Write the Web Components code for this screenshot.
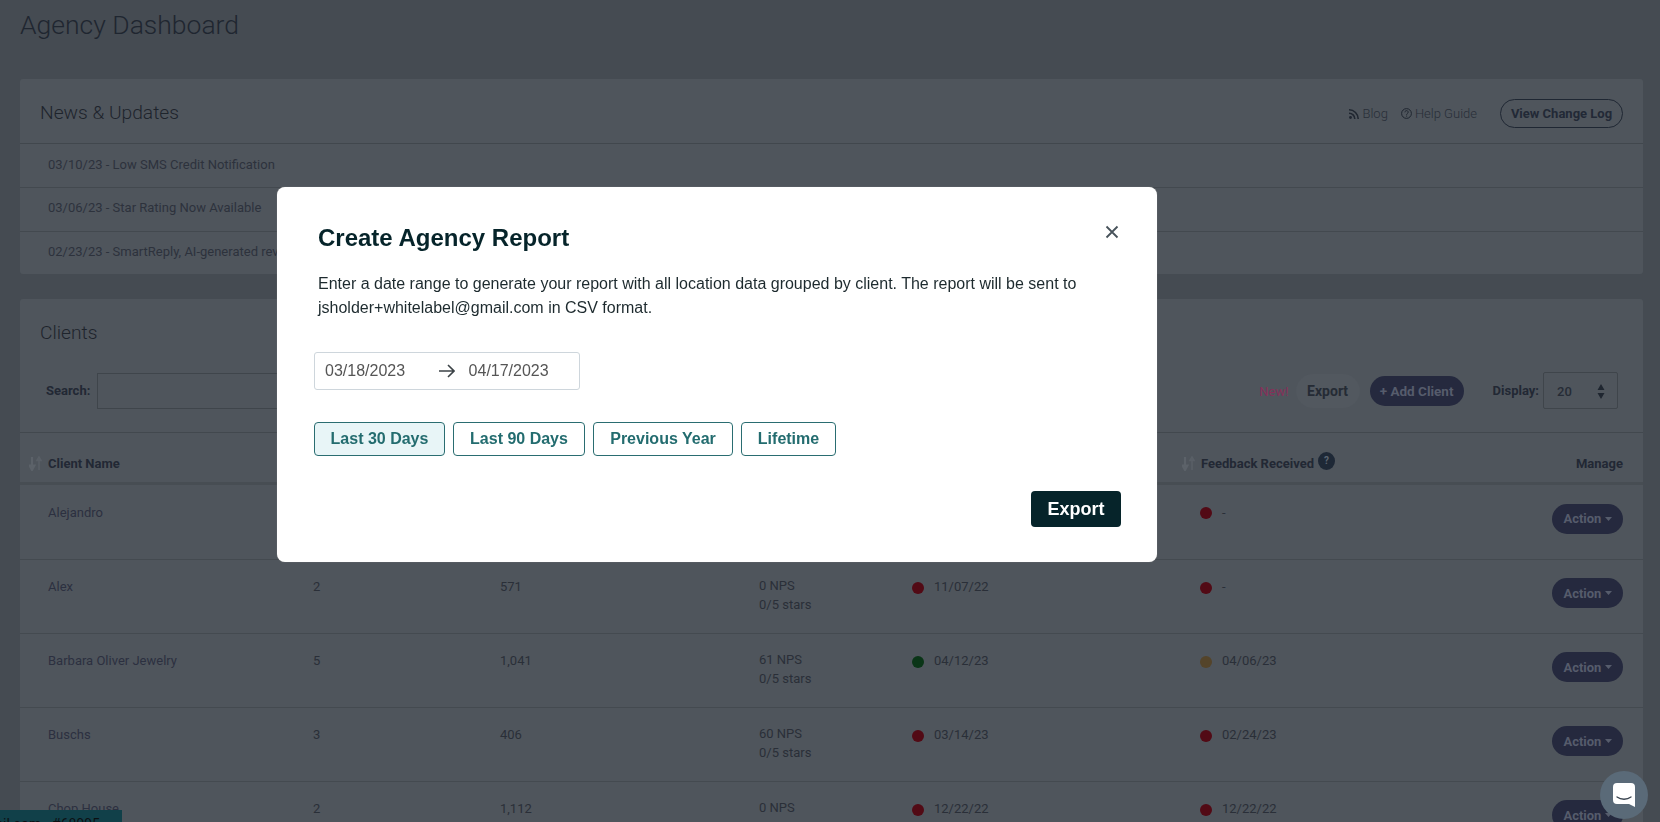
<!DOCTYPE html>
<html lang="en"><head><meta charset="utf-8"><title>Agency Dashboard</title>
<style>
html,body{margin:0;height:822px;overflow:hidden;background:#454b52}
body{font:13px Roboto,sans-serif;color:#2a2f38}
</style></head><body>
<agency-dashboard></agency-dashboard>
<report-modal></report-modal>
<account-tag></account-tag>
<chat-launcher></chat-launcher>
<script>
function define(name, css, html){
  customElements.define(name, class extends HTMLElement{
    connectedCallback(){
      if(this.shadowRoot) return;
      const r=this.attachShadow({mode:'open'});
      r.innerHTML='<style>'+css+'</style>'+(typeof html==='function'?html(this):html);
    }
  });
}
const a=(el,k,d='')=>el.getAttribute(k)??d;
const SORT='<svg width="13" height="15" viewBox="0 0 13 15"><path d="M3 1v10M0.6 9.5 3 14l2.400-4.500z" fill="#5c6269" stroke="#5c6269" stroke-width="2.200"/><path d="M10 14V4M7.900 4.500 10 1l2.100 3.500z" fill="#595f66" stroke="#595f66" stroke-width="1.600"/></svg>';

define('pill-button',`
:host{display:inline-flex;align-items:center;justify-content:center;box-sizing:border-box;border-radius:16px;font:700 13px Roboto,sans-serif;white-space:nowrap;height:30px}
:host([kind=navy]){background:#25293e;color:#565c6c}
:host([kind=ghost]){background:#52585f;color:#252b35;height:34px;width:64px;border-radius:17px;font-size:14px}
:host([kind=line]){border:1px solid #1f2733;color:#222936;height:29px;width:123px}
`,'<slot></slot>');

define('panel-card',`
:host{display:block;background:#4f555c;border-radius:3px}
`,'<slot></slot>');

define('news-row',`
:host{display:flex;align-items:center;height:43.330px;box-sizing:border-box;padding:0 0 3px 28px;border-top:1px solid #43494f;color:#2d323c;font:13px Roboto,sans-serif}
:host(:first-of-type){border-top:0}
`,'<slot></slot>');

define('news-panel',`
:host{display:block}
header{display:flex;align-items:center;height:64px;box-sizing:border-box;padding:5px 20px 0}
h2{margin:-3px 0 0;font:300 19.200px Roboto,sans-serif;color:#1e242c;flex:1}
.lnk{display:inline-flex;align-items:center;gap:3px;font:300 13px Roboto,sans-serif;color:#282e38;margin-right:13px}
.lnk svg{flex:none}
.lnk.last{margin-right:23px}
.rule{height:1px;background:#41474d}
`,`<panel-card>
<header><h2>News &amp; Updates</h2>
<span class="lnk"><svg width="10" height="10" viewBox="0 0 10 10" fill="#1f2630"><circle cx="1.500" cy="8.500" r="1.400"/><path d="M0 3.400a6.600 6.600 0 0 1 6.600 6.600H5A5 5 0 0 0 0 5zM0 0a10 10 0 0 1 10 10H8.400A8.400 8.400 0 0 0 0 1.600z"/></svg>Blog</span>
<span class="lnk last"><svg width="11" height="11" viewBox="0 0 11 11" fill="none" stroke="#1f2630"><circle cx="5.500" cy="5.500" r="4.900"/><path d="M3.900 4.300c0-2.200 3.300-2.200 3.300-.1 0 1.300-1.500 1.200-1.600 2.600M5.600 7.600v1" stroke-width="1"/></svg>Help Guide</span>
<pill-button kind="line">View Change Log</pill-button>
</header>
<div class="rule"></div>
<news-row>03/10/23 - Low SMS Credit Notification</news-row>
<news-row>03/06/23 - Star Rating Now Available</news-row>
<news-row>02/23/23 - SmartReply, AI-generated review responses</news-row>
</panel-card>`);

define('status-cell',`
:host{display:flex;align-items:center;gap:10px;color:#2a2f38;font:13px Roboto,sans-serif;height:19px}
i{width:12px;height:12px;border-radius:50%;flex:none;margin-top:2px}
`,el=>`<i style="background:${a(el,'color','#520a15')}"></i><slot></slot>`);

define('client-row',`
:host{display:grid;grid-template-columns:265px 187px 259px 153px 288px 1fr 71px;height:74px;box-sizing:border-box;padding:17.500px 20px 0 28px;border-top:1px solid #444a50;font:13px/19px Roboto,sans-serif;color:#2a2f38}
.name{color:#2c3040}
.act{justify-self:end;margin-top:1px}
.nps{line-height:18.500px}
`,el=>`<div class="name">${a(el,'name')}</div><div>${a(el,'locs')}</div><div>${a(el,'resp')}</div>
<div class="nps">${a(el,'nps')?a(el,'nps')+' NPS<br>0/5 stars':''}</div>
<div>${a(el,'d1')?`<status-cell color="${a(el,'c1')}">${a(el,'d1')}</status-cell>`:''}</div>
<div><status-cell color="${a(el,'c2')}">${a(el,'d2')}</status-cell></div>
<pill-button kind="navy" class="act" style="width:71px">Action&nbsp;<svg width="7" height="4" viewBox="0 0 7 4"><path d="M0 0h7L3.500 4z" fill="#565c6c"/></svg></pill-button>`);

define('clients-panel',`
:host{display:block;margin-top:25px}
h2{margin:0;font:300 19.200px/24px Roboto,sans-serif;color:#1e242c;padding:22px 20px 0}
.bar{display:flex;align-items:center;height:87px;padding:5px 25px 0 26px;box-sizing:border-box}
b{font:700 13px Roboto,sans-serif;color:#222834}
.search{display:block;width:440px;height:36px;box-sizing:border-box;border:1px solid #3f454b;margin-left:7px}
.sp{flex:1}
.new{color:#86305a;font:13px Roboto,sans-serif;margin-right:7px;margin-top:2px}
.add{margin:0 29px 0 10px;width:94px;font-size:13.500px}
.sel{display:flex;align-items:center;justify-content:space-between;width:75px;height:37px;box-sizing:border-box;border:1px solid #3f454b;border-radius:2px;padding:1px 12px 0 13px;margin-left:4px;color:#262c36;font:500 13px Roboto,sans-serif}
.head{display:grid;grid-template-columns:1153px 1fr auto;align-items:center;height:53px;box-sizing:border-box;border-top:1px solid #42484e;border-bottom:3px solid #474d53;padding:12px 20px 0 9px;color:#222834;font:700 13px Roboto,sans-serif}
.c{display:flex;align-items:center;gap:6px}
.q{display:inline-flex;align-items:center;justify-content:center;width:17px;height:18px;border-radius:50%;background:#1e2836;color:#5c6672;font:700 10px Roboto,sans-serif;margin:-5px 0 0 -2px}
`,`<panel-card>
<h2>Clients</h2>
<div class="bar"><b>Search:</b><span class="search"></span><span class="sp"></span>
<span class="new">New!</span><pill-button kind="ghost">Export</pill-button><pill-button kind="navy" class="add">+ Add Client</pill-button>
<b>Display:</b><span class="sel">20<svg width="8" height="15" viewBox="0 0 8 15" fill="#1f2630"><path d="M4 0l3.500 6h-7zM4 15l3.500-6h-7z"/></svg></span></div>
<div class="head"><span class="c">${SORT}Client Name</span><span class="c">${SORT}Feedback Received <span class="q">?</span></span><span>Manage</span></div>
<client-row name="Alejandro" c2="#520a15" d2="-" style="border-top:0;padding-top:18px"></client-row>
<client-row name="Alex" locs="2" resp="571" nps="0" c1="#520a15" d1="11/07/22" c2="#520a15" d2="-"></client-row>
<client-row name="Barbara Oliver Jewelry" locs="5" resp="1,041" nps="61" c1="#0a3517" d1="04/12/23" c2="#54442a" d2="04/06/23"></client-row>
<client-row name="Buschs" locs="3" resp="406" nps="60" c1="#520a15" d1="03/14/23" c2="#520a15" d2="02/24/23"></client-row>
<client-row name="Chop House" locs="2" resp="1,112" nps="0" c1="#520a15" d1="12/22/22" c2="#520a15" d2="12/22/22"></client-row>
</panel-card>`);

define('agency-dashboard',`
:host{display:block;padding:0 17px 0 20px}
h1{margin:0;height:79px;box-sizing:border-box;padding-top:8px;font:300 26.500px/34px Roboto,sans-serif;color:#1f2630}
`,`<h1>Agency Dashboard</h1><news-panel></news-panel><clients-panel></clients-panel>`);

define('preset-button',`
:host{display:inline-flex;align-items:center;justify-content:center;box-sizing:border-box;height:34px;border:1px solid #2a6d71;border-radius:4px;color:#236c6f;font:700 16px "Liberation Sans",Arial,sans-serif;background:#fff}
:host([active]){background:#e8f5f7}
`,'<slot></slot>');

define('report-modal',`
:host{position:fixed;left:277px;top:187px;width:880px;height:375px;box-sizing:border-box;background:#fff;border-radius:8px;padding:34px 36px 0 37px;font-family:"Liberation Sans",Arial,sans-serif;box-shadow:0 0 1px #999}
h2{margin:0 0 0 4px;font:700 24px/34px "Liberation Sans",Arial,sans-serif;color:#06242a}
p{margin:17px 0 0 4px;width:780px;font:16px/24px "Liberation Sans",Arial,sans-serif;color:#1d2a2e}
.close{position:absolute;left:828px;top:38px}
.range{display:flex;align-items:center;width:266px;height:38px;box-sizing:border-box;border:1px solid #ced6dc;border-radius:3px;margin-top:32px;padding-left:10px;color:#555;font-size:16px}
.range svg{margin:0 14px 0 33.500px}
.presets{display:flex;gap:8px;margin-top:32px}
.foot{display:flex;justify-content:flex-end;margin-top:35px}
.go{display:flex;align-items:center;justify-content:center;width:90px;height:36px;border-radius:4px;background:#06242a;color:#fff;font:700 18px "Liberation Sans",Arial,sans-serif}
`,`<h2>Create Agency Report</h2>
<svg class="close" width="14" height="14" viewBox="0 0 14 14" fill="none" stroke="#47525a" stroke-width="1.800"><path d="M1.500 1.500l11 11M12.500 1.500l-11 11"/></svg>
<p>Enter a date range to generate your report with all location data grouped by client. The report will be sent to jsholder+whitelabel@gmail.com in CSV format.</p>
<div class="range"><span>03/18/2023</span><svg width="16" height="14" viewBox="0 0 16 14" fill="none" stroke="#3c4347" stroke-width="1.600"><path d="M0 7h15M9 1l6 6-6 6"/></svg><span>04/17/2023</span></div>
<div class="presets"><preset-button active style="width:131px">Last 30 Days</preset-button><preset-button style="width:132px">Last 90 Days</preset-button><preset-button style="width:140px">Previous Year</preset-button><preset-button style="width:95px">Lifetime</preset-button></div>
<div class="foot"><div class="go">Export</div></div>`);

define('account-tag',`
:host{position:fixed;left:0;bottom:0;width:122px;height:12px;overflow:hidden;background:#114049;color:#0c0f12;font:14px/20px Roboto,sans-serif}
div{display:flex;justify-content:flex-end;padding-right:22px;white-space:nowrap;margin-top:4px}
`,`<div>jsholder+whitelabel@gmail.com - #68995</div>`);

define('chat-launcher',`
:host{position:fixed;left:1600px;top:771px;width:48px;height:48px;border-radius:50%;background:#5a6a78;display:flex;align-items:center;justify-content:center}
`,`<svg width="24" height="26" viewBox="0 0 24 26"><path d="M5 1h14a4 4 0 0 1 4 4v20l-6-3H5a4 4 0 0 1-4-4V5a4 4 0 0 1 4-4z" fill="#fff"/><path d="M5 15c4 3 10 3 14 0" fill="none" stroke="#3a4550" stroke-width="1.300" stroke-linecap="round"/></svg>`);
</script></body></html>
